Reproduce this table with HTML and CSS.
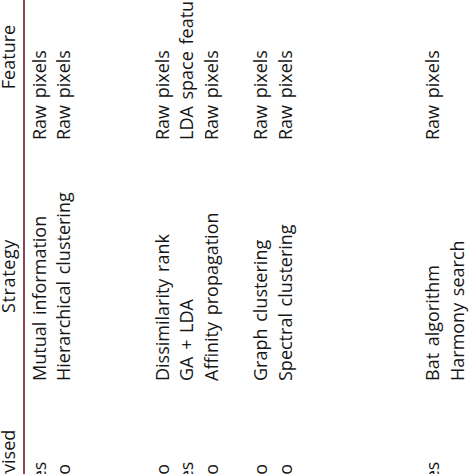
FILE: index.html
```html
<!DOCTYPE html>
<html>
<head>
<meta charset="utf-8">
<link rel="stylesheet" href="styles.css">
</head>
<body>
<div class="stage">
  <div class="rot">
    <div class="tbl">
      <div class="row head">
        <div class="c1">Supervised</div>
        <div class="c2">Strategy</div>
        <div class="c3">Feature</div>
      </div>
      <div class="body">
        <div class="row"><div class="c1">Yes</div><div class="c2 l">Mutual information</div><div class="c3 l">Raw pixels</div></div>
        <div class="row"><div class="c1">No</div><div class="c2 l">Hierarchical clustering</div><div class="c3 l">Raw pixels</div></div>
        <div class="row blank"></div>
        <div class="row blank"></div>
        <div class="row blank"></div>
        <div class="row"><div class="c1">No</div><div class="c2 l">Dissimilarity rank</div><div class="c3 l">Raw pixels</div></div>
        <div class="row"><div class="c1">Yes</div><div class="c2 l">GA + LDA</div><div class="c3 l">LDA space features</div></div>
        <div class="row"><div class="c1">No</div><div class="c2 l">Affinity propagation</div><div class="c3 l">Raw pixels</div></div>
        <div class="row blank"></div>
        <div class="row"><div class="c1">No</div><div class="c2 l">Graph clustering</div><div class="c3 l">Raw pixels</div></div>
        <div class="row"><div class="c1">No</div><div class="c2 l">Spectral clustering</div><div class="c3 l">Raw pixels</div></div>
        <div class="row blank"></div>
        <div class="row blank"></div>
        <div class="row blank"></div>
        <div class="row blank"></div>
        <div class="row blank"></div>
        <div class="row"><div class="c1">Yes</div><div class="c2 l">Bat algorithm</div><div class="c3 l">Raw pixels</div></div>
        <div class="row"><div class="c1"></div><div class="c2 l">Harmony search</div><div class="c3 l"></div></div>
      </div>
    </div>
  </div>
</div>
</body>
</html>
```
FILE: styles.css
```css
html, body {
  margin: 0;
  padding: 0;
  background: #ffffff;
  overflow: hidden;
}
.stage {
  width: 474px;
  height: 474px;
  overflow: hidden;
}
.rot {
  width: 474px;
  height: 474px;
  overflow: hidden;
  transform: rotate(-90deg);
}
.tbl {
  width: 560px;
  margin-left: -60px;
  margin-top: -4.3px;
  font-family: "Open Sans", "Noto Sans", sans-serif;
  font-size: 18px;
  line-height: 24.6px;
  word-spacing: 2px;
  color: #161616;
  white-space: nowrap;
}
.row {
  display: grid;
  grid-template-columns: 153px 241px 166px;
  height: 24.6px;
}
.head {
  height: auto;
  padding-bottom: 2.7px;
  border-bottom: 2px solid #92434f;
}
.head .c2 {
  letter-spacing: 0.6px;
}
.body {
  padding-top: 1.7px;
}
.c1 {
  padding-right: 37px;
  text-align: center;
}
.c2 {
  padding-right: 31px;
  text-align: center;
}
.c3 {
  text-align: center;
}
.l {
  text-align: left;
}
```
